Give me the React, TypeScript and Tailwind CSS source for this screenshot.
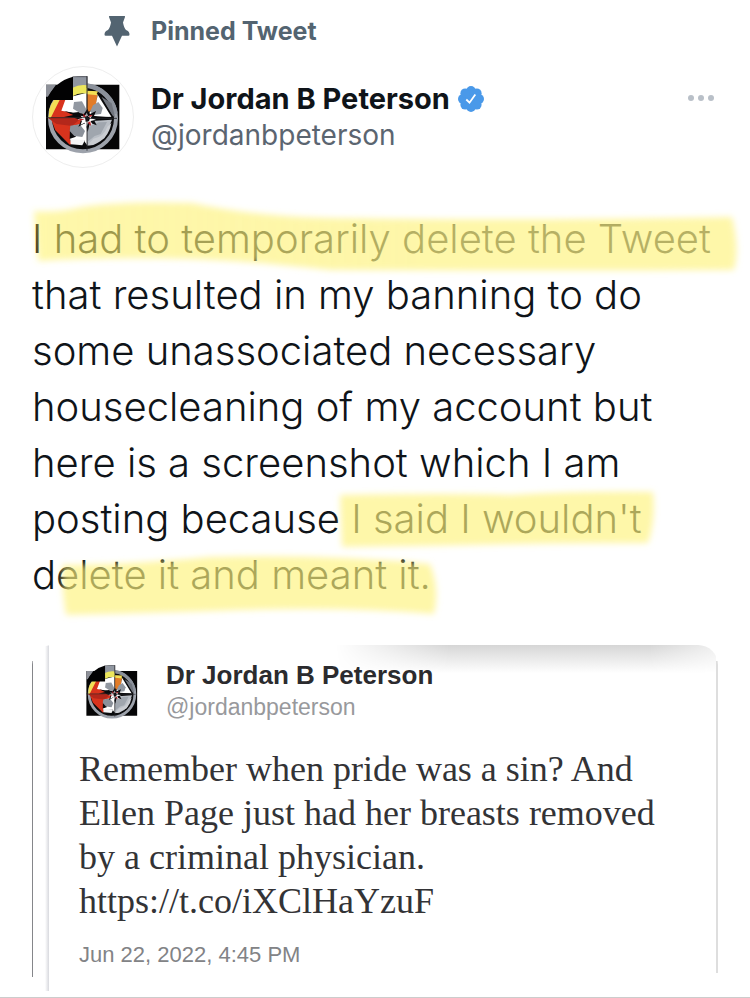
const TWEET_LINES = [
  "I had to temporarily delete the Tweet",
  "that resulted in my banning to do",
  "some unassociated necessary",
  "housecleaning of my account but",
  "here is a screenshot which I am",
  "posting because I said I wouldn't",
  "delete it and meant it.",
];

const QUOTE_LINES = [
  "Remember when pride was a sin? And",
  "Ellen Page just had her breasts removed",
  "by a criminal physician.",
];

const PinIcon = () => (
  <svg viewBox="0 0 26 32" className="h-8 w-[26px] fill-[#536471]" aria-hidden="true">
    <path d="M5.500 1h15q.8 0 .5 1l-2 5.500q1 5.500 3 7.500 3.500 1 3.500 4.500 0 1.200-1.200 1.200H18L13 31.500 8 20.700H1.700Q.5 20.700.5 19.500.5 16 4 15q2-2 3-7.500L5 2q-.3-1 .5-1z" />
  </svg>
);

const VerifiedIcon = () => (
  <svg viewBox="0 0 26 26" className="size-[26px]" role="img" aria-label="Verified account">
    <g fill="#4a99e9">
      <circle cx="13" cy="13" r="10.500" />
      <circle cx="13" cy="4.800" r="4.800" />
      <circle cx="18.800" cy="7.200" r="4.800" />
      <circle cx="21.200" cy="13" r="4.800" />
      <circle cx="18.800" cy="18.800" r="4.800" />
      <circle cx="13" cy="21.200" r="4.800" />
      <circle cx="7.200" cy="18.800" r="4.800" />
      <circle cx="4.800" cy="13" r="4.800" />
      <circle cx="7.200" cy="7.200" r="4.800" />
    </g>
    <path d="M8.300 13.500l3.200 3.200 5.800-8.200" fill="none" stroke="#fff" strokeWidth="1.800" />
  </svg>
);

const Artwork = ({ className }: { className: string }) => (
  <svg viewBox="0 0 222 234" className={className} role="img" aria-label="Dr Jordan B Peterson">
    <path d="M0 26h220v194H0z" fill="#050506" />
    <circle cx="111" cy="127" r="99" fill="#0b0b0d" stroke="#9da2ab" strokeWidth="12" />
    <path d="M124 22a105 105 0 0 1 91 90l-14 4A92 92 0 0 0 124 36z" fill="#8b919b" />
    <path d="M0 26h30L6 62H0z" fill="#8d9098" />
    {/* dial */}
    <path d="M10 100q8-31 41-52l12 12-30 66H8z" fill="#f3df55" />
    <path d="M48 58l36 22-16 30 36 14v26l-32 6-1 32 12 13-12 5-43-43-14-37z" fill="#d8331d" />
    <path d="M6 126h62l34 4-24 20-46-6z" fill="#b3271b" />
    <path d="M60 66l24-6 38-10v66l-24-8-18 2-34-6z" fill="#fff" />
    <path d="M84 78l24-2 13 24v14l-18-2-22-14z" fill="#9298a1" />
    <path d="M124 46l31 3-5 44-26 18z" fill="#e27c28" />
    <path d="M124 44l31 2v12l-31-3z" fill="#f3df55" />
    <path d="M156 52l42 70-40 2-33-8 24-28z" fill="#fff" />
    <path d="M166 62l31 20 10 41-8-4z" fill="#71767f" />
    <path d="M141 88l16-10 13 18-5 18-25 3-7-12z" fill="#9298a1" />
    <path d="M154 50l46 74" stroke="#0b0b0d" strokeWidth="5" />
    <path d="M124 136l74-5-23 56-51 22z" fill="#b9bec5" />
    <path d="M134 150l24-11 25-1-19 36-18 6-22 18v-38z" fill="#a0a6ae" />
    <path d="M142 188q32-6 42-36l12-11q-8 48-54 66-10 2-17 1z" fill="#cacdd2" />
    <path d="M80 150l43-10v67l-10-14-38 2-3-7 18-6-15-18z" fill="#fff" />
    <path d="M73 149l28-4 16 20-8 18-24-3-14-15z" fill="#8b919a" />
    <path d="M72 193l44-1-8 26q-24-3-36-25z" fill="#09090b" />
    <path d="M73 190l44 2-8 16-35-3z" fill="#f4f4f5" />
    {/* compass star */}
    <path
      d="M54 105l44 9 15 1 11-16 8 15 18-9-6 15 54 4-54 8 8 16-20-8-7 28-6-28-22 12 9-19-22-8-30-2 28-6z"
      fill="#0a0a0c"
    />
    <path d="M104 119l12 3 6-12 5 11 12-5-5 11 16 4-16 4 5 11-13-6-4 13-6-13-12 6 4-12-13-4 14-4z" fill="#fff" />
    <path d="M111 112l10 12-8-1zM140 118l-11 7 2-9zM98 128l18 2-13 4zM133 136l-8 4 10 10z" fill="#b51f25" />
    <path d="M117 123l8-4 7 7-3 10-10 1z" fill="#0a0a0c" />
    {/* upper left quadrant */}
    <path d="M79 4q24-6 45-3v34l-45 5z" fill="#9096a0" />
    <path d="M80 35q20-11 44-7v25q-25-5-44 8z" fill="#ece65c" />
    <path d="M2 72Q24 17 81 2v70z" fill="#020203" />
    <path d="M123 0v224M0 125h123M123 127h90" fill="none" stroke="#242529" strokeWidth="2.500" />
    <path d="M80 2h43v34" fill="none" stroke="#3c3d42" strokeWidth="2" />
  </svg>
);

const Highlights = () => (
  <svg
    viewBox="0 0 750 430"
    className="pointer-events-none absolute top-0 -left-8 h-[430px] w-[750px] overflow-visible"
    aria-hidden="true"
  >
    <defs>
      <linearGradient id="marker-top" gradientUnits="userSpaceOnUse" x1="32" x2="420" y1="0" y2="0">
        <stop offset="0" stopColor="#fef044" stopOpacity=".45" />
        <stop offset=".07" stopColor="#fdf16c" stopOpacity=".58" />
        <stop offset=".5" stopColor="#fdf278" stopOpacity=".64" />
        <stop offset="1" stopColor="#fdf384" stopOpacity=".7" />
      </linearGradient>
      <filter id="soften" x="-10%" y="-20%" width="120%" height="140%">
        <feGaussianBlur stdDeviation="3" />
      </filter>
    </defs>
    <g filter="url(#soften)">
      <path
        d="M34 0Q58 2 82-4Q120-10 192-8Q250 5 330 7Q520 10 732 6Q740 38 734 59Q560 60 330 59Q250 50 190 48Q110 46 38 50z"
        fill="url(#marker-top)"
      />
      <path d="M340 284Q450 282 510 284Q580 280 653 281Q656 308 648 332Q580 332 520 333Q430 335 342 336z" fill="#fdf37c" fillOpacity=".66" />
      <path d="M62 354Q120 354 210 346Q330 343 430 353Q440 378 434 403Q350 396 240 399Q150 402 66 404Q62 380 62 354z" fill="#fdf37c" fillOpacity=".66" />
    </g>
  </svg>
);

export default function App() {
  return (
    <main className="min-h-screen overflow-hidden bg-white font-['Inter',sans-serif] text-[#0f1419]">
      <article className="px-8">
        <div className="flex h-[66px] items-start gap-[21px] pt-[15px] pl-[72px] text-[#536471]">
          <PinIcon />
          <p className="text-[25px] leading-8 font-bold">Pinned Tweet</p>
        </div>

        <header className="flex items-start gap-[17px]">
          <a
            href="#profile"
            className="flex size-[102px] shrink-0 items-center justify-center rounded-full border border-[#eeeeee] pb-1"
          >
            <Artwork className="h-[78px] w-[74px]" />
          </a>
          <div className="min-w-0 flex-1 pt-[15px]">
            <div className="flex items-center gap-2">
              <h1 className="text-[29px] leading-9 font-bold">Dr Jordan B Peterson</h1>
              <VerifiedIcon />
            </div>
            <a href="#profile" className="block text-[28px] leading-9 text-[#5b6570]">
              @jordanbpeterson
            </a>
          </div>
          <button type="button" aria-label="More" className="mt-[29px] mr-1 flex gap-1">
            <span className="size-[6px] rounded-full bg-[#b9c0c8]" />
            <span className="size-[6px] rounded-full bg-[#b9c0c8]" />
            <span className="size-[6px] rounded-full bg-[#b9c0c8]" />
          </button>
        </header>

        <div className="relative mt-[43px]">
          <p className="text-[40px] leading-[56px] font-[350]">
            {TWEET_LINES.map((line) => (
              <span key={line} className="block whitespace-nowrap">
                {line}
              </span>
            ))}
          </p>
          <Highlights />
        </div>

        <section className="mt-[42px] flex h-[352px] items-stretch overflow-hidden rounded-t-[20px]">
          <div className="mt-4 mb-5 w-px bg-[#85868a]" />
          <div className="mb-[6px] ml-3 w-1 bg-linear-to-r from-white to-[#d8d9de]" />
          <div className="flex flex-1 flex-col rounded-tr-[20px]">
            <div className="h-7 bg-linear-to-b from-[#d6d6d6] to-white mask-[linear-gradient(to_right,transparent_43%,black_60%,black_90%,#0006)]" />
            <div className="relative -mt-[14px] flex items-start gap-7 pl-[37px] font-['Liberation_Sans',sans-serif]">
              <Artwork className="mt-[6px] h-[54px] w-[52px]" />
              <div>
                <h2 className="text-[26px] leading-8 font-bold text-[#2b2b2e]">Dr Jordan B Peterson</h2>
                <p className="text-[23px] leading-8 text-[#98999c]">@jordanbpeterson</p>
              </div>
            </div>
            <p className="mt-6 pl-[30px] font-['Liberation_Serif',serif] text-[36px] leading-[44px] text-[#333336]">
              {QUOTE_LINES.map((line) => (
                <span key={line} className="block whitespace-nowrap">
                  {line}
                </span>
              ))}
              <a href="https://t.co/iXClHaYzuF">https://t.co/iXClHaYzuF</a>
            </p>
            <p className="mt-[18px] pl-[30px] font-['Liberation_Sans',sans-serif] text-[22px] leading-7 text-[#828386]">
              Jun 22, 2022, 4:45 PM
            </p>
          </div>
          <div className="mt-4 mb-6 w-[2px] bg-[#dedede]" />
        </section>
      </article>
      <hr className="border-[#cccccc]" />
    </main>
  );
}
